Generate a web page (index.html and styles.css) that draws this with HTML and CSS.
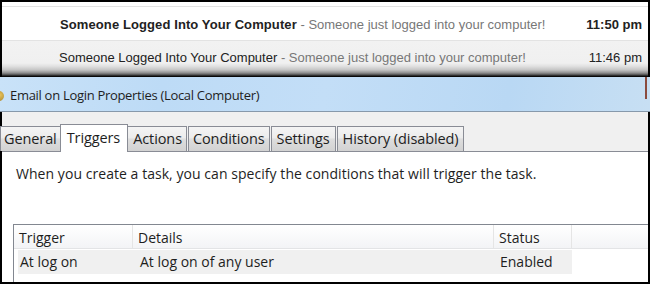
FILE: index.html
```html
<!DOCTYPE html>
<html>
<head>
<meta charset="utf-8">
<link rel="stylesheet" href="styles.css">
</head>
<body>
<div class="frame">
  <section class="mail">
    <div class="mail-gap"></div>
    <div class="mail-row unread">
      <div class="mail-text"><span class="subject">Someone Logged Into Your Computer</span><span class="snippet"> - Someone just logged into your computer!</span></div>
      <div class="mail-time">11:50 pm</div>
    </div>
    <div class="mail-row read">
      <div class="mail-text"><span class="subject">Someone Logged Into Your Computer</span><span class="snippet"> - Someone just logged into your computer!</span></div>
      <div class="mail-time">11:46 pm</div>
    </div>
  </section>
  <section class="dialog">
    <header class="titlebar">
      <span class="app-icon"></span>
      <span class="title">Email on Login Properties (Local Computer)</span>
      <span class="close-edge"></span>
    </header>
    <div class="body">
      <nav class="tabs">
        <div class="tab t-general">General</div>
        <div class="tab active">Triggers</div>
        <div class="tab t-actions">Actions</div>
        <div class="tab">Conditions</div>
        <div class="tab t-mid">Settings</div>
        <div class="tab t-mid">History (disabled)</div>
      </nav>
      <div class="panel">
        <p class="intro">When you create a task, you can specify the conditions that will trigger the task.</p>
        <div class="table">
          <div class="thead">
            <div class="th c1">Trigger</div>
            <div class="th c2">Details</div>
            <div class="th c3">Status</div>
            <div class="th c4"></div>
          </div>
          <div class="trow">
            <div class="td c1">At log on</div>
            <div class="td c2">At log on of any user</div>
            <div class="td c3">Enabled</div>
          </div>
        </div>
      </div>
    </div>
  </section>
</div>
</body>
</html>
```

FILE: styles.css
```css
* { box-sizing: border-box; }
html, body { margin: 0; padding: 0; }
body { width: 650px; height: 284px; overflow: hidden; background: #000; }

.frame {
  width: 650px;
  height: 284px;
  display: flex;
  flex-direction: column;
  border-top: 2px solid #000;
  border-bottom: 2px solid #000;
  overflow: hidden;
}

/* ---------- mail list ---------- */
.mail {
  border-left: 2px solid #000;
  border-right: 2px solid #000;
  background: #fff;
  font-family: "Liberation Sans", Arial, sans-serif;
  font-size: 13px;
}
.mail-gap {
  height: 5px;
  border-bottom: 1px solid #e3e3e3;
}
.mail-row {
  display: flex;
  align-items: center;
  padding: 0 6px 0 58px;
}
.mail-row.unread {
  height: 34px;
  border-bottom: 1px solid #e3e3e3;
  padding-top: 1px;
}
.mail-row.unread .subject,
.mail-row.unread .mail-time { font-weight: bold; color: #222; }
.mail-row.unread .subject { letter-spacing: 0.1px; }
.mail-row.read {
  height: 36px;
  padding-left: 57px;
  padding-bottom: 4px;
  background: linear-gradient(to bottom, #f2f2f2 0, #f0f0f0 22px, #e2e2e2 25px, #c4c4c4 29px, #8c8c8c 32px, #4a4a4a 34px, #111 35px, #000 36px);
}
.mail-text { flex: 1; white-space: nowrap; }
.subject { color: #222; }
.snippet { color: #777; }
.mail-time { color: #222; }

/* ---------- dialog ---------- */
.dialog {
  flex: 1;
  display: flex;
  flex-direction: column;
  font-family: "Open Sans", "Noto Sans", sans-serif;
  color: #1e1e1e;
}
.titlebar {
  height: 35px;
  display: flex;
  align-items: center;
  position: relative;
  background: linear-gradient(100deg, #c9e2f8 0%, #bddbf6 25%, #c3def7 50%, #b9d8f4 78%, #c7dff3 100%);
  border-bottom: 1px solid #8799ab;
  padding-left: 10px;
  padding-top: 2px;
}
.app-icon {
  position: absolute;
  left: -6px;
  top: 14px;
  width: 10px;
  height: 10px;
  border-radius: 50%;
  background: radial-gradient(circle at 60% 40%, #e8c35a, #a07c2a);
}
.close-edge {
  position: absolute;
  right: 3px;
  top: 0;
  width: 2px;
  height: 22px;
  background: #8a4b3e;
}
.title { font-size: 13px; letter-spacing: -0.3px; }

.body {
  flex: 1;
  display: flex;
  flex-direction: column;
  border-left: 2px solid #000;
  border-right: 2px solid #000;
  background: #f0f0f0;
}
.tabs {
  display: flex;
  align-items: flex-end;
  height: 39px;
  margin-left: -2px;
}
.tab {
  height: 25px;
  padding: 0 4px;
  border: 1px solid #898c95;
  border-bottom: none;
  margin-right: 1px;
  background: linear-gradient(to bottom, #f4f4f4 0%, #ececec 45%, #dedede 50%, #d2d2d2 100%);
  font-size: 14.5px;
  letter-spacing: -0.1px;
  line-height: 24px;
  white-space: nowrap;
}
.tab.t-general { padding-left: 3px; padding-right: 3px; }
.tab.t-actions { padding-left: 5px; padding-right: 4px; }
.tab.t-mid { padding-left: 5px; padding-right: 5px; }
.tab.active {
  height: 28px;
  background: #fff;
  margin: 0 -1px -1px -2px;
  padding: 0 7px 0 6px;
  line-height: 25px;
  position: relative;
  z-index: 1;
}

.panel {
  flex: 1;
  background: #fff;
  border-top: 1px solid #898c95;
  padding: 12px 0 0 11px;
}
.intro {
  margin: 0;
  font-size: 14px;
  letter-spacing: 0.05px;
  line-height: 20px;
  padding-left: 3px;
}
.table {
  margin-top: 40px;
  border-top: 1px solid #828790;
  border-left: 1px solid #828790;
  height: 80px;
  font-size: 14px;
  letter-spacing: 0;
}
.thead {
  display: flex;
  height: 24px;
  background: linear-gradient(to bottom, #ffffff, #f3f4f6);
  border-bottom: 1px solid #e3e4e6;
}
.th {
  line-height: 23px;
  padding: 1px 0 0 5px;
  border-right: 1px solid #e5e5e5;
}
.c1 { width: 119px; }
.c2 { width: 361px; }
.c3 { width: 78px; }
.c4 { flex: 1; border-right: none; }
.trow {
  display: flex;
  height: 24px;
  margin: 1px 0 0 4px;
  width: 554px;
  background: #f0f0f0;
}
.td { line-height: 24px; padding-left: 2px; }
.trow .c1 { width: 120px; }
.trow .c2 { width: 360px; }
.trow .c3 { width: auto; }
```
